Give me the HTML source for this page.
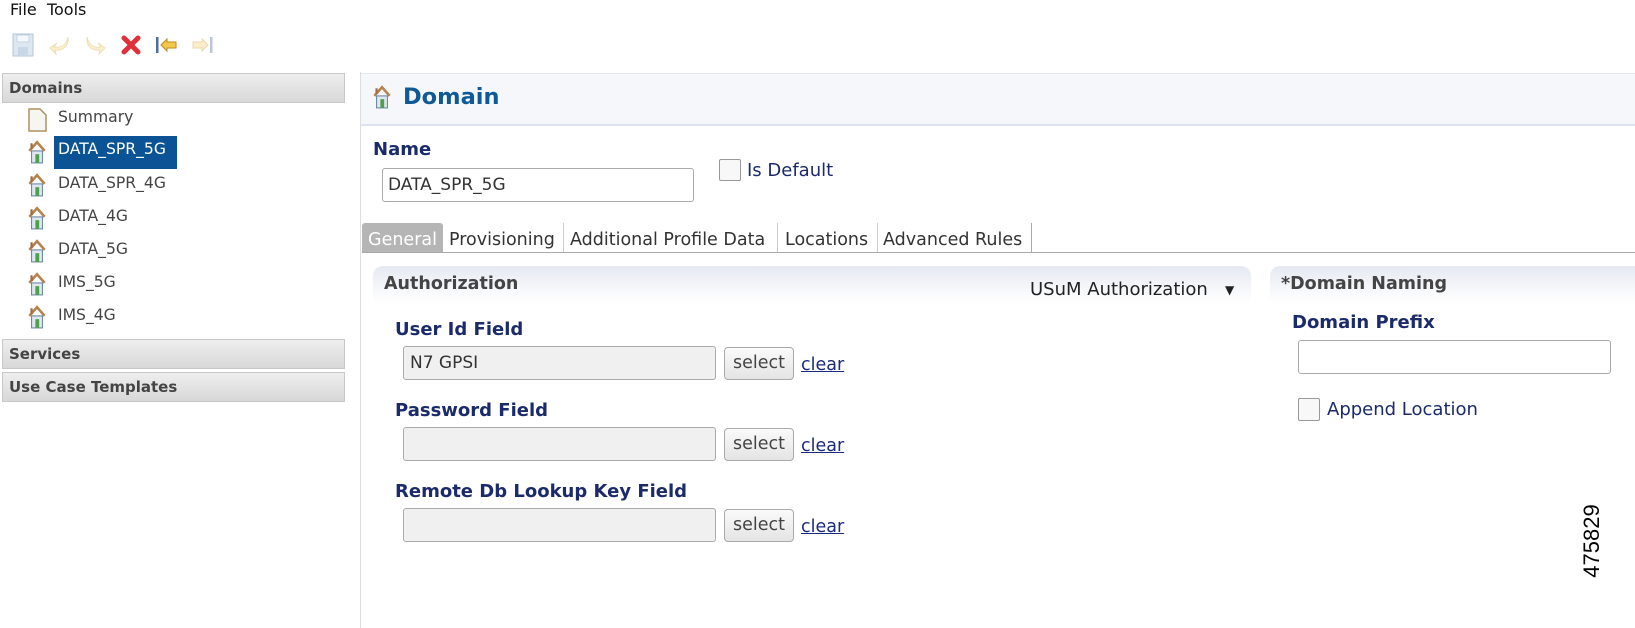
<!DOCTYPE html>
<html><head><meta charset="utf-8"><style>
*{margin:0;padding:0;box-sizing:border-box}
body{width:1635px;height:628px;background:#fff;font-family:"DejaVu Sans","Liberation Sans",sans-serif;position:relative;overflow:hidden;color:#333}
.a{position:absolute;white-space:nowrap}
.bar{position:absolute;left:2px;width:343px;height:30px;background:linear-gradient(#eeeeee,#d8d8d8);border:1px solid #c8c8c8;font-weight:bold;font-size:15px;color:#444;padding:5px 0 0 6px}
.item{position:absolute;left:58px;font-size:15.6px;color:#444}
.hi{position:absolute;width:20px;height:24px}
.lbl{position:absolute;font-weight:bold;font-size:18px;color:#1b2a6b}
.inp{position:absolute;background:#f0f0f0;border:1px solid #aaa;border-radius:3px;height:34px;width:313px;left:403px;font-size:17px;padding:6px 6px;color:#333}
.btn{position:absolute;left:724px;width:70px;height:33px;border:1px solid #aaa;border-radius:4px;background:linear-gradient(#fafafa,#e4e4e4);font-size:17.5px;color:#444;text-align:center;line-height:31px}
.clr{position:absolute;left:801px;font-size:17.5px;color:#1a2a80;text-decoration:underline}
.tab{position:absolute;top:223px;height:29px;font-size:17.5px;color:#333;line-height:34px}
.sep{position:absolute;top:223px;width:1px;height:29px;background:#ccc}
</style></head><body>
<svg width="0" height="0" style="position:absolute"><defs>
<symbol id="h" viewBox="0 0 18 22"><path d="M2 10 L9 2 L16 10" fill="none" stroke="#b58350" stroke-width="2.4"/><rect x="3" y="3" width="2" height="5" fill="#a06a40"/><rect x="4" y="10" width="10" height="11" fill="#dfe6ee" stroke="#6d8aa8" stroke-width="1"/><rect x="7.5" y="13" width="3.5" height="8" fill="#4fa04a"/></symbol>
</defs></svg>

<div class="a" style="left:10px;top:0;font-size:16px;color:#111">File&nbsp;&nbsp;Tools</div>
<!-- toolbar -->
<svg class="a" style="left:12px;top:33px" width="22" height="24"><rect x="1" y="1" width="20" height="22" fill="#dde7f2" stroke="#b5c6d8"/><rect x="5" y="2" width="12" height="7" fill="#f4f8fc" stroke="#c5d3e2"/><rect x="6" y="14" width="10" height="8" fill="#c9d7e6"/></svg>
<svg class="a" style="left:48px;top:34px" width="24" height="22"><path d="M20 3 C18 12 12 14 6 13 L9 9 L2 14 L8 20 L7 16 C14 17 21 13 20 3Z" fill="#fbf0d0" stroke="#eedfb2"/></svg>
<svg class="a" style="left:83px;top:34px" width="24" height="22"><path d="M4 3 C6 12 12 14 18 13 L15 9 L22 14 L16 20 L17 16 C10 17 3 13 4 3Z" fill="#fbf0d0" stroke="#eedfb2"/></svg>
<svg class="a" style="left:121px;top:35px" width="20" height="20"><path d="M3 3 L17 17 M17 3 L3 17" stroke="#e0303a" stroke-width="5" stroke-linecap="round"/></svg>
<svg class="a" style="left:155px;top:35px" width="24" height="20"><rect x="1" y="2" width="2.5" height="16" fill="#4a6ea0"/><path d="M6 10 L12 4 L12 7 L21 7 L21 13 L12 13 L12 16Z" fill="#f2c94c" stroke="#c08a20"/></svg>
<svg class="a" style="left:190px;top:35px" width="24" height="20"><rect x="20" y="2" width="2.5" height="16" fill="#b8c6d8"/><path d="M18 10 L12 4 L12 7 L3 7 L3 13 L12 13 L12 16Z" fill="#fbeccc" stroke="#eed9a8"/></svg>

<!-- sidebar -->
<div class="a" style="left:360px;top:72px;width:1px;height:556px;background:#ddd"></div>
<div class="bar" style="top:73px">Domains</div>
<svg class="a" style="left:28px;top:108px" width="19" height="24"><path d="M1 1 H12 L18 7 V23 H1Z" fill="#f6f6f0" stroke="#b09060" stroke-width="1.5"/></svg>
<div class="item" style="top:108px">Summary</div>
<div class="a" style="left:54px;top:136px;width:123px;height:33px;background:#0b5394"></div>
<svg class="hi" style="left:27px;top:140px"><use href="#h"/></svg><div class="item" style="top:140px;color:#fff">DATA_SPR_5G</div>
<svg class="hi" style="left:27px;top:173px"><use href="#h"/></svg><div class="item" style="top:174px">DATA_SPR_4G</div>
<svg class="hi" style="left:27px;top:206px"><use href="#h"/></svg><div class="item" style="top:207px">DATA_4G</div>
<svg class="hi" style="left:27px;top:239px"><use href="#h"/></svg><div class="item" style="top:240px">DATA_5G</div>
<svg class="hi" style="left:27px;top:272px"><use href="#h"/></svg><div class="item" style="top:273px">IMS_5G</div>
<svg class="hi" style="left:27px;top:305px"><use href="#h"/></svg><div class="item" style="top:306px">IMS_4G</div>
<div class="bar" style="top:339px">Services</div>
<div class="bar" style="top:372px">Use Case Templates</div>

<!-- main header -->
<div class="a" style="left:361px;top:73px;width:1274px;height:53px;background:#f5f7fb;border-top:1px solid #e2e6ee;border-bottom:2px solid #dde2ee"></div>
<svg class="hi" style="left:372px;top:85px"><use href="#h"/></svg>
<div class="a" style="left:403px;top:84px;font-size:22.5px;font-weight:bold;color:#0f5a96">Domain</div>

<div class="lbl" style="left:373px;top:139px">Name</div>
<div class="a" style="left:382px;top:168px;width:312px;height:34px;border:1px solid #aaa;border-radius:3px;font-size:17px;padding:6px 5px;color:#333">DATA_SPR_5G</div>
<div class="a" style="left:719px;top:159px;width:22px;height:22px;border:1px solid #999;border-radius:2px;background:#f8f8f8"></div>
<div class="a" style="left:747px;top:160px;font-size:18px;color:#1b2a6b">Is Default</div>

<!-- tabs -->
<div class="a" style="left:362px;top:252px;width:1273px;height:1px;background:#aaa"></div>
<div class="tab" style="left:362px;width:81px;background:#b5b5b5;color:#fff;text-align:center;border-radius:3px 3px 0 0">General</div>
<div class="tab" style="left:449px">Provisioning</div><div class="sep" style="left:563px"></div>
<div class="tab" style="left:570px">Additional Profile Data</div><div class="sep" style="left:777px"></div>
<div class="tab" style="left:785px">Locations</div><div class="sep" style="left:877px"></div>
<div class="tab" style="left:883px">Advanced Rules</div><div class="sep" style="left:1031px;background:#aaa"></div>

<!-- authorization panel -->
<div class="a" style="left:373px;top:266px;width:878px;height:36px;border-radius:10px 10px 0 0;background:linear-gradient(#e6e9f2,#fff)"></div>
<div class="a" style="left:384px;top:274px;font-size:17.5px;font-weight:bold;color:#444">Authorization</div>
<div class="a" style="left:1030px;top:279px;font-size:18px;color:#222">USuM Authorization</div>
<div class="a" style="left:1225px;top:283px;font-size:12px;color:#222">▼</div>

<div class="lbl" style="left:395px;top:319px">User Id Field</div>
<div class="inp" style="top:346px">N7 GPSI</div>
<div class="btn" style="top:347px">select</div><div class="clr" style="top:355px">clear</div>
<div class="lbl" style="left:395px;top:400px">Password Field</div>
<div class="inp" style="top:427px"></div>
<div class="btn" style="top:428px">select</div><div class="clr" style="top:436px">clear</div>
<div class="lbl" style="left:395px;top:481px">Remote Db Lookup Key Field</div>
<div class="inp" style="top:508px"></div>
<div class="btn" style="top:509px">select</div><div class="clr" style="top:517px">clear</div>

<!-- domain naming -->
<div class="a" style="left:1270px;top:266px;width:365px;height:36px;border-radius:10px 0 0 0;background:linear-gradient(#e6e9f2,#fff)"></div>
<div class="a" style="left:1281px;top:274px;font-size:17.5px;font-weight:bold;color:#444">*Domain Naming</div>
<div class="lbl" style="left:1292px;top:312px">Domain Prefix</div>
<div class="a" style="left:1298px;top:340px;width:313px;height:34px;border:1px solid #aaa;border-radius:3px"></div>
<div class="a" style="left:1298px;top:398px;width:22px;height:23px;border:1px solid #999;border-radius:2px;background:#f8f8f8"></div>
<div class="a" style="left:1327px;top:399px;font-size:18px;color:#1b2a6b">Append Location</div>

<div class="a" style="left:1552px;top:528px;font-size:22px;color:#000;transform:rotate(-90deg);transform-origin:center;width:80px;text-align:center;font-family:'Liberation Sans',sans-serif">475829</div>
</body></html>
